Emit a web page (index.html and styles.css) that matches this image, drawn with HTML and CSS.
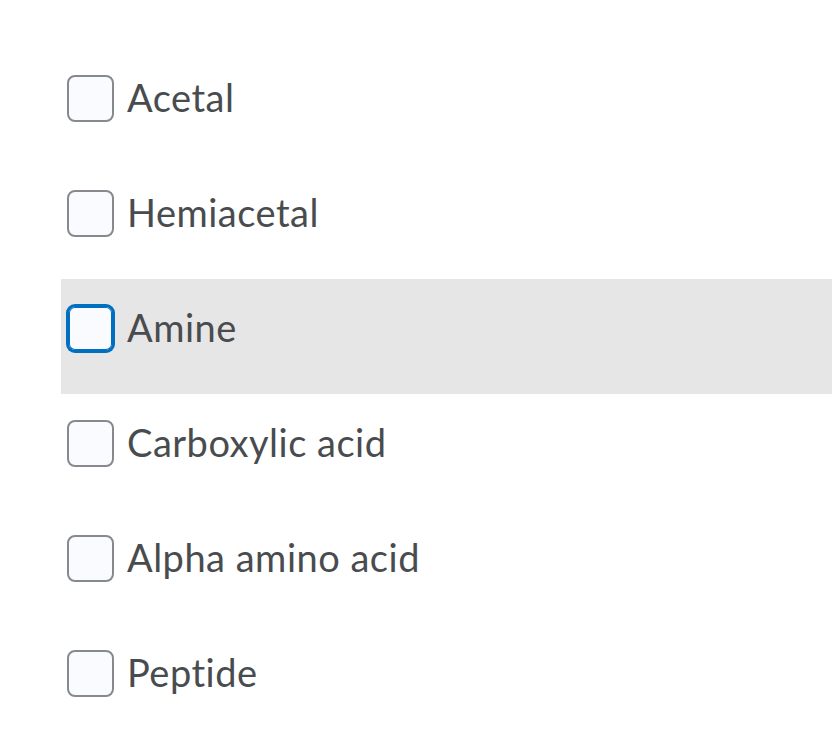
FILE: index.html
```html
<!DOCTYPE html>
<html lang="en">
<head>
<meta charset="utf-8">
<title>Options</title>
<link rel="stylesheet" href="styles.css">
</head>
<body>
<div class="list">
  <label class="row"><span class="box"></span><span class="text">Acetal</span></label>
  <label class="row"><span class="box"></span><span class="text">Hemiacetal</span></label>
  <label class="row hover"><span class="box focus"></span><span class="text">Amine</span></label>
  <label class="row"><span class="box"></span><span class="text">Carboxylic acid</span></label>
  <label class="row"><span class="box"></span><span class="text">Alpha amino acid</span></label>
  <label class="row"><span class="box"></span><span class="text">Peptide</span></label>
</div>
</body>
</html>
```

FILE: styles.css
```css
html, body {
  margin: 0;
  padding: 0;
  background: #ffffff;
}
.list {
  padding: 49px 0 0 61px;
  display: flex;
  flex-direction: column;
}
.row {
  display: flex;
  align-items: flex-start;
  height: 115px;
  box-sizing: border-box;
  padding: 26px 0 0 6px;
  font-family: Lato, "Liberation Sans", sans-serif;
  font-size: 38px;
  color: #494c4e;
}
.row.hover {
  background: #e6e6e6;
}
.box {
  flex: none;
  width: 47px;
  height: 47px;
  box-sizing: border-box;
  border: 2px solid #868a8e;
  border-radius: 8px;
  background: #f9fbff;
}
.box.focus {
  border-color: #006fbf;
  box-shadow: 0 0 0 1px #006fbf, inset 0 0 0 1px #006fbf;
  border-radius: 8px;
}
.text {
  margin-left: 13px;
  margin-top: -1px;
  line-height: 47px;
  letter-spacing: 0.5px;
  white-space: nowrap;
}
```
